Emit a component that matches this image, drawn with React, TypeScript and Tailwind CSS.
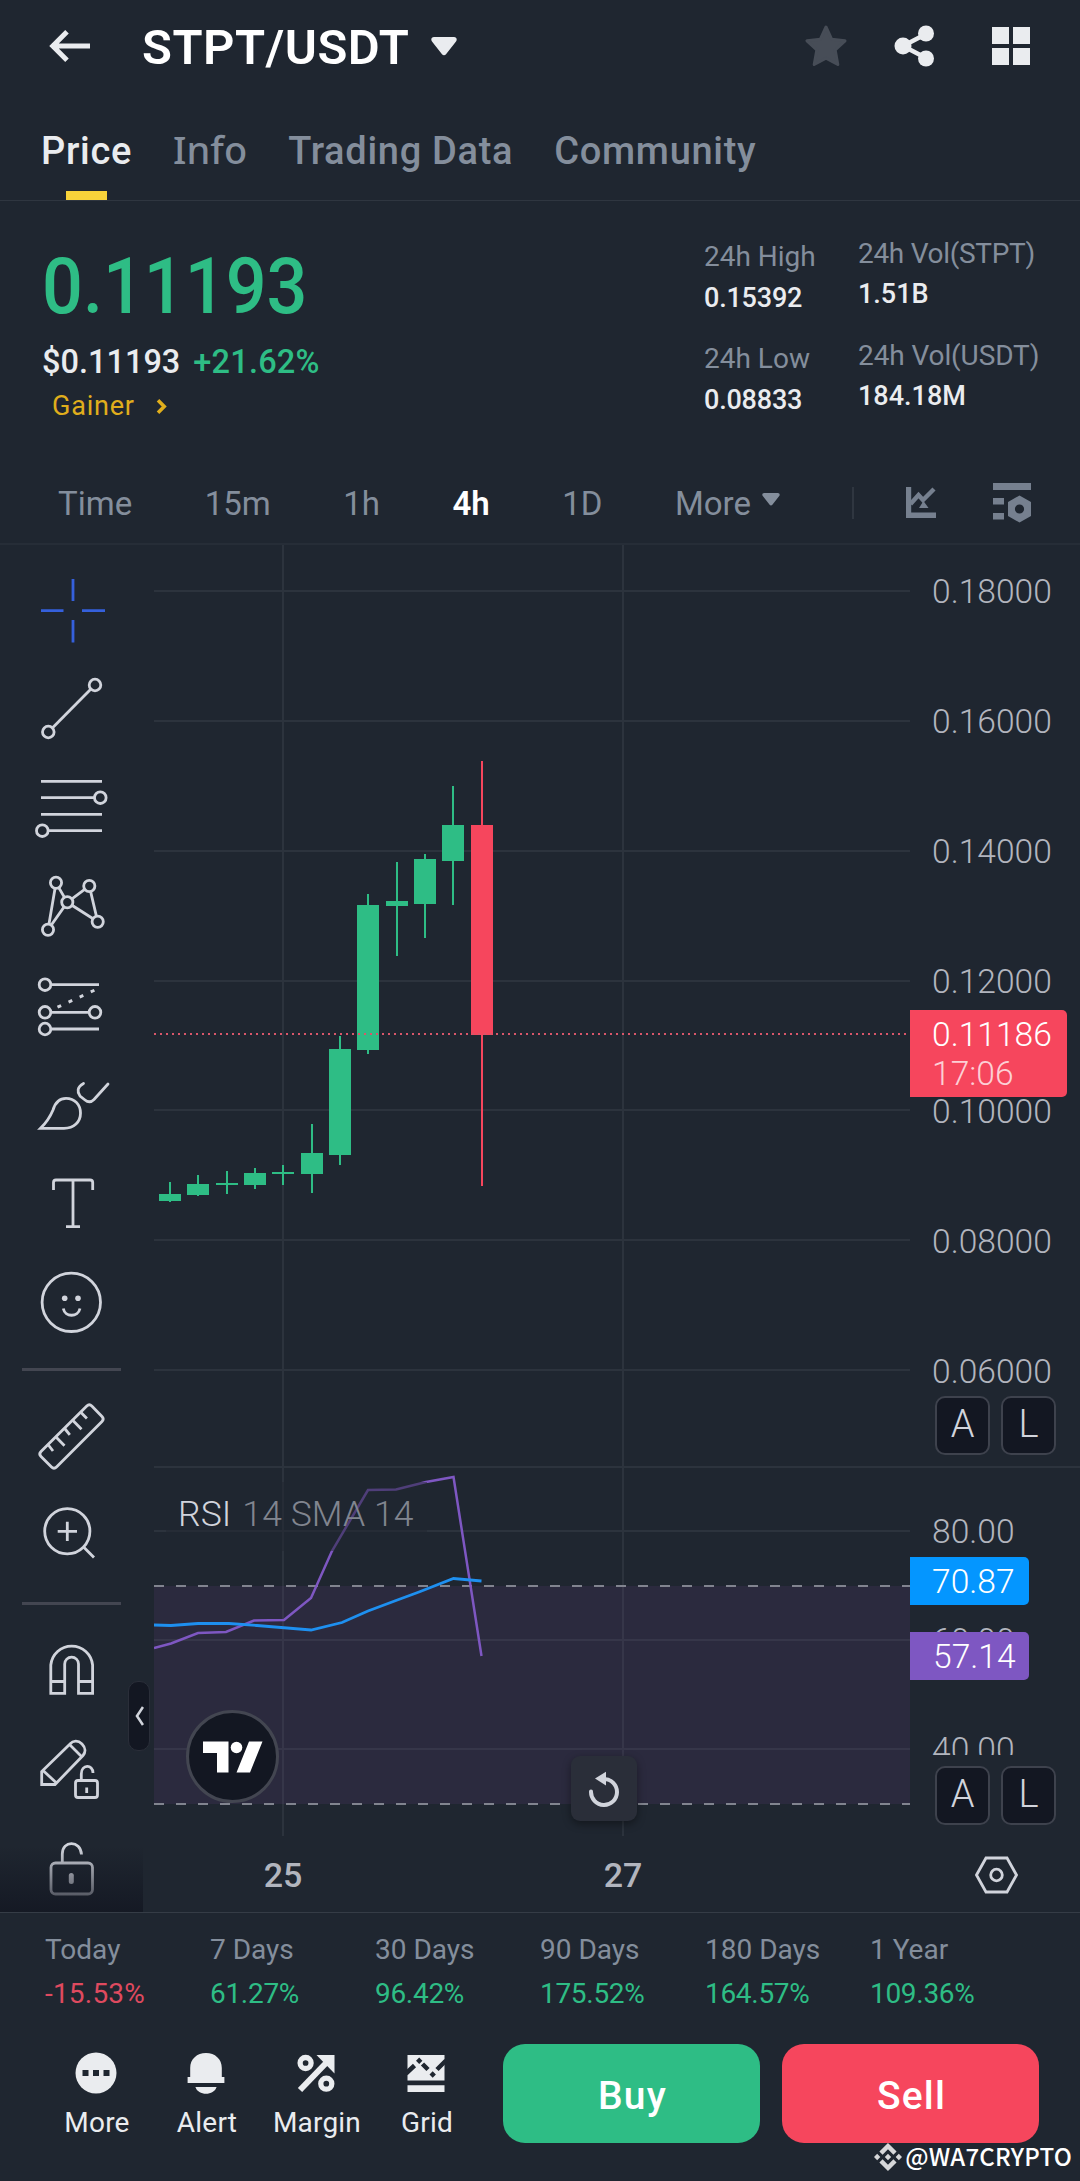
import React from 'react';
import { SiBinance } from 'react-icons/si';

interface Candle {
  x: number;
  high: number;
  top: number;
  bottom: number;
  low: number;
  down?: boolean;
}

const TABS = ['Price', 'Info', 'Trading Data', 'Community'];
const INTERVALS = ['Time', '15m', '1h', '4h', '1D'];
const PRICE_TICKS = ['0.18000', '0.16000', '0.14000', '0.12000', '0.10000', '0.08000', '0.06000'];
const RSI_TICKS = ['80.00', '60.00', '40.00'];

const PRICE_GRID = [591, 721, 851, 981, 1110, 1240, 1370];
const RSI_GRID = [1531, 1640, 1749];
const DAY_GRID = [283, 623];

const CANDLES: Candle[] = [
  { x: 170, high: 1182, top: 1194, bottom: 1201, low: 1202 },
  { x: 198, high: 1175, top: 1184, bottom: 1195, low: 1196 },
  { x: 227, high: 1171, top: 1183, bottom: 1185, low: 1194 },
  { x: 255, high: 1168, top: 1173, bottom: 1185, low: 1189 },
  { x: 283, high: 1165, top: 1172, bottom: 1174, low: 1185 },
  { x: 312, high: 1124, top: 1153, bottom: 1174, low: 1193 },
  { x: 340, high: 1036, top: 1049, bottom: 1155, low: 1165 },
  { x: 368, high: 894, top: 905, bottom: 1050, low: 1054 },
  { x: 397, high: 862, top: 901, bottom: 906, low: 956 },
  { x: 425, high: 854, top: 859, bottom: 904, low: 938 },
  { x: 453, high: 786, top: 825, bottom: 861, low: 905 },
  { x: 482, high: 761, top: 825, bottom: 1035, low: 1186, down: true },
];

const RSI_LINE = '154,1648 171,1643.5 198,1633 226,1632 254,1620.5 284,1620 311,1598 332,1551 368,1490 396,1489.5 426,1482 453.5,1477 481.5,1656';
const SMA_LINE = '154,1625 171,1625.5 198,1623.5 229,1623.5 257,1625.5 311,1630 342,1622.5 368,1611 396,1600.5 419,1592 453.5,1578.5 481.5,1581';

const PERFORMANCE = [
  { label: 'Today', value: '-15.53%' },
  { label: '7 Days', value: '61.27%' },
  { label: '30 Days', value: '96.42%' },
  { label: '90 Days', value: '175.52%' },
  { label: '180 Days', value: '164.57%' },
  { label: '1 Year', value: '109.36%' },
];

const Caret: React.FC<{ className: string }> = ({ className }) => (
  <svg className={className} viewBox="0 0 26 19" fill="currentColor">
    <path d="M3 0H23C25.5 0 26.5 2.5 25 4.5L15 17.2C14 18.6 12 18.6 11 17.2L1 4.5C-.5 2.5 .5 0 3 0Z" />
  </svg>
);

const Header = () => (
  <header className="flex h-[94px] items-center pr-[50px] pl-[49px]">
    <svg className="mb-[2px] h-[32px] w-[42px]" viewBox="0 0 42 32" fill="none" stroke="#EAECEF" strokeWidth="5">
      <path d="M41 16H4M18 1.8L3.8 16L18 30.2" />
    </svg>
    <h1 className="ml-[51px] text-[49px] leading-none font-semibold tracking-[0.5px] text-white">STPT/USDT</h1>
    <Caret className="mb-[2px] ml-[21px] h-[19px] w-[26px] text-[#EAECEF]" />
    <svg className="mb-[2px] ml-auto h-[42px] w-[42px]" viewBox="0 0 42 42" fill="#474D57" stroke="#474D57" strokeWidth="3" strokeLinejoin="round">
      <path d="M21 2L26.6 14.2L40 15.8L30.2 25L32.8 39.5L21 33.2L9.2 39.5L11.8 25L2 15.8L15.4 14.2Z" />
    </svg>
    <svg className="mb-[2px] ml-[47px] h-[42px] w-[41px]" viewBox="0 0 41 42" fill="#EAECEF" stroke="#EAECEF">
      <path d="M32 9L9 21L32 33" fill="none" strokeWidth="4.5" />
      <circle cx="32" cy="8.5" r="8" stroke="none" />
      <circle cx="9" cy="21" r="8.5" stroke="none" />
      <circle cx="32" cy="33.5" r="8" stroke="none" />
    </svg>
    <div className="mb-[2px] ml-[57px] grid grid-cols-2 gap-[4px]">
      {[0, 1, 2, 3].map((i) => (
        <span key={i} className="h-[17px] w-[17px] bg-[#EAECEF]" />
      ))}
    </div>
  </header>
);

const TabBar = () => (
  <nav className="flex h-[107px] gap-[41px] border-b border-[#2F3640] pl-[41px]">
    {TABS.map((tab, i) => (
      <div key={tab} className={`relative ${tab === 'Info' ? 'pt-[35px]' : 'pt-[37px]'}`}>
        <span
          className={`text-[38px] leading-[40px] font-medium ${tab === 'Info' ? 'font-["Noto_Sans",sans-serif]' : 'tracking-[0.7px]'} ${
            i === 0 ? 'text-[#EAECEF]' : 'text-[#848E9C]'
          }`}
        >
          {tab}
        </span>
        {i === 0 && <span className="absolute bottom-0 left-[25px] h-[9px] w-[41px] bg-[#F8D33A]" />}
      </div>
    ))}
  </nav>
);

const Summary = () => (
  <section className="flex h-[259px]">
    <div className="pl-[42px]">
      <p className="mt-[46px] origin-left scale-x-[0.935] text-[77px] leading-[80px] font-medium text-[#2EBD85]">0.11193</p>
      <p className="mt-[15px] text-[32.5px] leading-[40px] font-medium whitespace-pre">
        <span className="text-[#EAECEF]">$0.11193</span>
        <span className="ml-[13px] tracking-[0.2px] text-[#2EBD85]">+21.62%</span>
      </p>
      <p className="mt-[9px] flex items-center pl-[10px] text-[27px] leading-[30px] tracking-[0.8px] text-[#E0AE1C]">
        Gainer
        <svg className="ml-[21px] h-[15px] w-[11px]" viewBox="0 0 11 15" fill="none" stroke="currentColor" strokeWidth="3.6">
          <path d="M2 1.3L8.2 7.5L2 13.7" />
        </svg>
      </p>
    </div>
    <div className="ml-auto w-[154px] pt-[40px] text-[27px] leading-[32px]">
      <p className="text-[28px] text-[#848E9C]">24h High</p>
      <p className="mt-[9px] font-medium tracking-[-0.2px] text-[#EAECEF]">0.15392</p>
      <p className="mt-[29px] text-[28px] text-[#848E9C]">24h Low</p>
      <p className="mt-[9px] font-medium tracking-[-0.2px] text-[#EAECEF]">0.08833</p>
    </div>
    <div className="w-[222px] pt-[37px] text-[27px] leading-[32px]">
      <p className="text-[28px] tracking-[-0.3px] text-[#848E9C]">24h Vol(STPT)</p>
      <p className="mt-[8px] font-medium text-[#EAECEF]">1.51B</p>
      <p className="mt-[30px] text-[28px] tracking-[-0.1px] text-[#848E9C]">24h Vol(USDT)</p>
      <p className="mt-[8px] font-medium text-[#EAECEF]">184.18M</p>
    </div>
  </section>
);

const IntervalBar = () => (
  <div className="flex h-[83px] items-center gap-[72.5px] pt-[4px] pl-[58px] text-[33px] leading-[40px] text-[#848E9C]">
    {INTERVALS.map((item) => (
      <span key={item} className={item === '4h' ? 'font-semibold text-white' : ''}>
        {item}
      </span>
    ))}
    <span className="flex items-center">
      More
      <Caret className="mb-[8px] ml-[11px] h-[13px] w-[18px]" />
    </span>
    <div className="mb-[2px] ml-auto flex items-center pr-[49px]">
      <span className="h-[32px] w-[2px] bg-[#2F3640]" />
      <svg className="ml-[52px] h-[31px] w-[30px]" viewBox="0 0 30 31" fill="none" stroke="#76808F" strokeWidth="5">
        <path d="M2.5 0V28.3H30" strokeWidth="5.4" />
        <path d="M4.5 17L12.5 8L17 13L28 2" strokeWidth="4.4" />
        <path d="M13 21L17.5 14L22.5 21Z" fill="#76808F" stroke="none" />
      </svg>
      <svg className="mr-[3px] ml-[57px] h-[40px] w-[39px]" viewBox="0 0 39 40" fill="#76808F">
        <path d="M0 0H38V7H0ZM0 15H11V21.5H0ZM0 30H11V36.5H0Z" />
        <path fillRule="evenodd" d="M26.5 12.5L38 19V33L26.5 39.5L15 33V19ZM26.5 21.4A4.6 4.6 0 1 0 26.5 30.6A4.6 4.6 0 1 0 26.5 21.4Z" />
      </svg>
    </div>
  </div>
);

const Tool: React.FC<{ children: React.ReactNode; color?: string }> = ({ children, color = '#D1D4DC' }) => (
  <div className="flex h-[99px] shrink-0 items-center">
    <svg className="h-[80px] w-[80px]" viewBox="0 0 80 80" fill="none" stroke={color} strokeWidth="2.8">
      {children}
    </svg>
  </div>
);

const Toolbar = () => (
  <aside className="relative flex h-[1367px] w-[143px] shrink-0 flex-col overflow-hidden pt-[15px] pl-[32px]">
    <Tool color="#3560DC">
      <path d="M41 9V31M41 50V72.5M9 40.7H31.5M50 40.7H73" />
    </Tool>
    <Tool>
      <path d="M20.6 58.7L58.7 20.3" />
      <circle cx="16.3" cy="63" r="5.8" />
      <circle cx="63" cy="16" r="5.8" />
    </Tool>
    <Tool>
      <path d="M9 13.3H70M9 29.7H62.5M9 46.3H70M16 62.7H70" />
      <circle cx="68.3" cy="29.7" r="5.8" />
      <circle cx="10.3" cy="62.7" r="5.8" />
    </Tool>
    <Tool>
      <path d="M24 15.7L16 62.7L35.3 35.3ZM35.3 35.3L57.3 19L65.7 54.7Z" />
      <g fill="#1F2630">
        <circle cx="24" cy="15.7" r="5.6" />
        <circle cx="57.3" cy="19" r="5.6" />
        <circle cx="35.3" cy="35.3" r="5.6" />
        <circle cx="16" cy="62.7" r="5.6" />
        <circle cx="65.7" cy="54.7" r="5.6" />
      </g>
    </Tool>
    <Tool>
      <path d="M19 18.7H67M19 46.3H57M19 63H67" />
      <path d="M25.5 41.2L62.5 24.2" strokeDasharray="4 8.2" strokeWidth="3" />
      <circle cx="13" cy="18.7" r="5.8" />
      <circle cx="13" cy="46.3" r="5.8" />
      <circle cx="63" cy="46.3" r="5.8" />
      <circle cx="13" cy="63" r="5.8" />
    </Tool>
    <Tool>
      <path d="M8.5 63.3C15 57 18.5 51 21 45C23 38 27.5 33.3 34 33.3C43 33.3 48.5 40 48.5 48C48.5 57 42 63.3 32 63.3Z" />
      <path d="M51.5 18.5C45 22 45 27 48 31L53 35C56 37.5 59.5 37 62 34.5L76 19" strokeLinecap="round" />
    </Tool>
    <Tool>
      <path d="M21.5 26V18.5Q21.5 16 24 16H58Q60.7 16 60.7 18.5V26M41 16V62.7M34 62.7H48" />
    </Tool>
    <Tool>
      <circle cx="39.3" cy="39.3" r="29.2" />
      <circle cx="32.7" cy="35.3" r="2.8" fill="#D1D4DC" stroke="none" />
      <circle cx="46" cy="35.3" r="2.8" fill="#D1D4DC" stroke="none" />
      <path d="M31.3 45.5C33 54.5 46 54.5 48 45.5" />
    </Tool>
    <hr className="mt-[16px] -ml-[10px] w-[99px] shrink-0 border-t-3 border-[#434651]" />
    <div className="mt-[16px]">
      <Tool>
        <path d="M54.8 9Q57.3 6.5 59.8 9L70 19.5Q72.5 22 70 24.5L24.5 70Q22 72.5 19.5 70L9 59.5Q6.5 57 9 54.5Z" />
        <path d="M16 47.5L21 54M24 40L32.5 48.7M32.7 31.5L37.8 37.8M40.7 23.3L49.5 32.3M49 15.5L54.9 21.5" />
      </Tool>
      <Tool>
        <circle cx="35.3" cy="35.3" r="22.6" />
        <path d="M35.3 25.7V45M25.7 35.3H45M51.3 50.7L62 61.5" />
      </Tool>
    </div>
    <hr className="mt-[17px] -ml-[10px] w-[99px] shrink-0 border-t-3 border-[#434651]" />
    <div className="mt-[14px]">
      <Tool>
        <path d="M18.8 64.3V36A21 21 0 0 1 60.6 36V64.3H46.5V35A6.9 6.9 0 0 0 32.7 35V64.3ZM18.8 52.5H32.7M46.5 52.5H60.6" />
      </Tool>
      <Tool>
        <path d="M9.7 56.5V43.5L38 16C41 12.5 46 12 50 16C54 20 53.5 24.5 51 27.5L23 56.5ZM10.5 42L24.5 55M38 17L49.5 28.5" />
        <rect x="43.5" y="52.5" width="22" height="17" rx="2.5" />
        <path d="M49.3 52V46C49.3 36 61 36 61 45M54.7 59.5V65" />
      </Tool>
      <Tool>
        <rect x="19" y="36" width="41.5" height="31" rx="4.5" />
        <path d="M30.3 36V27C30.3 13 48.5 13 49.5 27.5" />
        <path d="M39.3 48.5V54.5" strokeWidth="5" strokeLinecap="round" />
      </Tool>
    </div>
    <div className="absolute bottom-0 left-0 h-[66px] w-[143px] bg-linear-to-b from-[#131722]/0 to-[#131722]/85" />
  </aside>
);

const Plot = () => (
  <svg className="h-[1292px] w-[756px] shrink-0" viewBox="154 545 756 1292">
    <rect x="154" y="1586" width="756" height="218" fill="#2B2A3E" />
    <g stroke="#2C333D" strokeWidth="2">
      {[...PRICE_GRID, ...RSI_GRID].map((y) => (
        <line key={y} x1="154" x2="910" y1={y} y2={y} />
      ))}
      {DAY_GRID.map((x) => (
        <line key={x} x1={x} x2={x} y1="545" y2="1836" />
      ))}
      <line x1="154" x2="910" y1="1467" y2="1467" />
    </g>
    <path d="M154 1640H910M154 1749H910M283 1586V1804M623 1586V1804" stroke="#363649" strokeWidth="2" />
    <path d="M154 1586H910M154 1804H910" stroke="#81848F" strokeWidth="2" strokeDasharray="10 12" />
    {CANDLES.map((c) => (
      <g key={c.x} fill={c.down ? '#F6465D' : '#2EBD85'}>
        <rect x={c.x - 1} y={c.high} width="2" height={c.low - c.high} />
        <rect x={c.x - 11} y={c.top} width="22" height={c.bottom - c.top} />
      </g>
    ))}
    <line x1="154" x2="910" y1="1034" y2="1034" stroke="#D9566A" strokeWidth="2" strokeDasharray="2 4" />
    <polyline points={RSI_LINE} fill="none" stroke="#7E57C2" strokeWidth="2.5" />
    <rect x="166" y="1482" width="261" height="69" fill="#1F2630" opacity="0.5" />
    <polyline points={SMA_LINE} fill="none" stroke="#1E90F0" strokeWidth="2.8" />
  </svg>
);

const ScaleButtons = () => (
  <div className="flex gap-[11px] pl-[25px]">
    {['A', 'L'].map((label) => (
      <span key={label} className="flex h-[59px] w-[55px] items-center justify-center rounded-[10px] border-2 border-[#3E424D] bg-[#131722] pb-[2px] text-[38px] font-light text-[#D1D4DC]">
        {label}
      </span>
    ))}
  </div>
);

const Axis = () => (
  <div className="relative w-[170px] text-[33.6px] leading-[39px] font-light text-[#B2B5BE]">
    <div className="h-[921px] pt-[27px]">
      <div className="flex flex-col gap-[91px] pl-[22px]">
        {PRICE_TICKS.map((tick) => (
          <span key={tick}>{tick}</span>
        ))}
      </div>
      <div className="mt-[5px]">
        <ScaleButtons />
      </div>
    </div>
    <div className="border-t-2 border-[#2C333D]">
      <div className="flex h-[287px] flex-col gap-[70px] overflow-hidden pt-[44px] pl-[22px]">
        {RSI_TICKS.map((tick) => (
          <span key={tick} className="shrink-0">{tick}</span>
        ))}
      </div>
      <div className="mt-[11px]">
        <ScaleButtons />
      </div>
    </div>
    <div className="absolute top-[465px] left-0 h-[87px] w-[157px] rounded-r-[5px] bg-[#F6465D] pt-[5px] pl-[22px] text-white">
      <p>0.11186</p>
      <p className="text-white/75">17:06</p>
    </div>
    <div className="absolute top-[1012px] left-0 h-[48px] w-[119px] rounded-r-[5px] bg-[#0496FF] pl-[22px] leading-[49px] text-white">70.87</div>
    <div className="absolute top-[1087px] left-0 h-[48px] w-[119px] rounded-r-[5px] bg-[#7E57C2] pl-[23px] leading-[49px] text-white">57.14</div>
  </div>
);

const ChartOverlays = () => (
  <>
    <p className="absolute top-[949px] left-[24px] text-[35.5px] leading-[40px] font-light tracking-[0.1px] text-[#81858F]">
      <span className="mr-[11px] text-[#D1D4DC]">RSI</span>14 SMA 14
    </p>
    <div className="absolute top-[1165px] left-[32px] flex h-[93px] w-[93px] items-center justify-center rounded-full border-3 border-[#434651] bg-[#131722]">
      <svg className="h-[32px] w-[60px]" viewBox="0 0 60 32" fill="#fff">
        <path d="M0 .5H25.5V31.5H14V12H0ZM46 .5H59.5L47 31.5H33.5Z" />
        <circle cx="33.5" cy="6.5" r="5.8" />
      </svg>
    </div>
    <div className="absolute top-[1211px] left-[417px] flex h-[65px] w-[66px] items-center justify-center rounded-[9px] bg-[#2A2E39] shadow-[0_3px_8px_rgba(0,0,0,0.4)]">
      <svg className="h-[36px] w-[32px]" viewBox="0 0 32 36" fill="none" stroke="#D1D4DC" strokeWidth="4">
        <path d="M3 20.5A13 13 0 1 0 16 8H14" strokeLinecap="round" />
        <path d="M7 7.5L18 .8V14.5Z" fill="#D1D4DC" stroke="none" />
      </svg>
    </div>
    <div className="absolute top-[1136px] -left-[26px] flex h-[70px] w-[22px] items-center justify-center rounded-[10px] border border-[#2A2E39] bg-[#131722]">
      <svg className="h-[20px] w-[9px]" viewBox="0 0 9 20" fill="none" stroke="#D1D4DC" strokeWidth="2.6">
        <path d="M8 1L2 10L8 19" />
      </svg>
    </div>
  </>
);

const Chart = () => (
  <main className="flex border-t-2 border-b border-t-[#262D37] border-b-[#353C46]">
    <Toolbar />
    <div className="relative ml-[11px] flex h-[1367px] flex-1 flex-col">
      <div className="flex h-[1292px]">
        <Plot />
        <Axis />
      </div>
      <div className="flex h-[75px] items-center text-[34px] leading-[40px] font-medium text-[#B2B5BE]">
        <span className="ml-[89px] w-[80px] text-center">25</span>
        <span className="ml-[260px] w-[80px] text-center">27</span>
        <svg className="mr-[62px] ml-auto h-[38px] w-[43px]" viewBox="0 0 43 38" fill="none" stroke="#D1D4DC" strokeWidth="2.8">
          <path d="M11 2H32L41.5 19L32 36H11L1.5 19Z" />
          <circle cx="21.5" cy="19" r="5.8" />
        </svg>
      </div>
      <ChartOverlays />
    </div>
  </main>
);

const Performance = () => (
  <section className="flex pt-[21px] pl-[45px] text-[28px] leading-[32px]">
    {PERFORMANCE.map(({ label, value }) => (
      <div key={label} className="w-[165px]">
        <p className="text-[#848E9C]">{label}</p>
        <p className={`mt-[12px] ${value.startsWith('-') ? 'tracking-[0.2px] text-[#DF4A5F]' : 'tracking-[-0.3px] text-[#2EBD85]'}`}>{value}</p>
      </div>
    ))}
  </section>
);

const Action: React.FC<{ label: string; children: React.ReactNode }> = ({ label, children }) => (
  <button className="flex w-[110px] flex-col items-center pt-[7px] text-[28px] leading-[32px] text-[#EAECEF]">
    <svg className="mb-[12px] h-[44px] w-[44px]" viewBox="0 0 44 44" fill="#EAECEF">
      {children}
    </svg>
    <span className="pl-[2px] tracking-[0.2px]">{label}</span>
  </button>
);

const ActionBar = () => (
  <footer className="mt-[34px] flex h-[99px] pl-[41px]">
    <Action label="More">
      <circle cx="22" cy="22" r="20.5" />
      <path d="M8.5 19H14.5V25H8.5ZM19 19H25V25H19ZM29.5 19H35.5V25H29.5Z" fill="#1F2630" />
    </Action>
    <Action label="Alert">
      <path d="M6.2 17C6.2 8 13 2 22 2S37.8 8 37.8 17V26H40.4V32H3.6V26H6.2ZM11.4 36H32.6C30 45 14 45 11.4 36Z" />
    </Action>
    <Action label="Margin">
      <path d="M6 39L34 10" stroke="#EAECEF" strokeWidth="6" />
      <path d="M22.5 4H40.5V22.5Z" />
      <g fill="none" stroke="#EAECEF" strokeWidth="5.3">
        <circle cx="11.6" cy="12" r="5.5" />
        <circle cx="32.3" cy="32.7" r="5.5" />
      </g>
    </Action>
    <Action label="Grid">
      <path d="M3.5 4H40.5V29.5H3.5ZM3.5 34.3H40.5V41H3.5Z" />
      <path d="M2 22.5L10.5 14.5M18.5 13L24 18.5M33 18.5L42 9.5" stroke="#1F2630" strokeWidth="4.5" />
      <path d="M15.2 6.5L18.4 9.7L15.2 12.9L12 9.7ZM28.7 20.3L31.9 23.5L28.7 26.7L25.5 23.5Z" fill="#1F2630" />
    </Action>
    <button className="ml-[22px] w-[257px] rounded-[22px] bg-[#2EBD85] pt-[6px] pl-[2px] text-[39px] font-medium tracking-[1.2px] text-white">Buy</button>
    <button className="ml-[22px] w-[257px] rounded-[22px] bg-[#F6465D] pt-[6px] pl-[2px] text-[39px] font-medium tracking-[1.2px] text-white">Sell</button>
  </footer>
);

const App: React.FC = () => {
  return (
    <div className="h-[2181px] w-[1080px] overflow-hidden bg-[#1F2630] font-[Roboto,sans-serif]">
      <Header />
      <TabBar />
      <Summary />
      <IntervalBar />
      <Chart />
      <Performance />
      <ActionBar />
      <div className="flex h-[28px] items-center justify-end pr-[8px] font-['Noto_Sans_CJK_SC',sans-serif] text-[24px] leading-[28px] font-medium tracking-[0.2px] text-white">
        <SiBinance className="mr-[3px] h-[28px] w-[28px] text-[#D6D7D9]" />
        <span className="-mt-[2px]">@WA7CRYPTO</span>
      </div>
    </div>
  );
};

export default App;
